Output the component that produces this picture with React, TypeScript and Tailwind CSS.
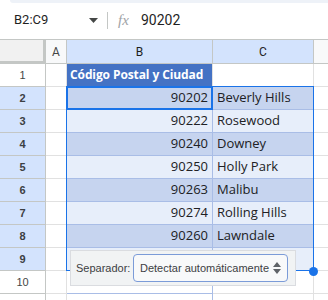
import React from "react";

const rows = [
  { n: 1, b: "Código Postal y Ciudad", c: "", kind: "head" },
  { n: 2, b: "90202", c: "Beverly Hills", kind: "dark" },
  { n: 3, b: "90222", c: "Rosewood", kind: "light" },
  { n: 4, b: "90240", c: "Downey", kind: "dark" },
  { n: 5, b: "90250", c: "Holly Park", kind: "light" },
  { n: 6, b: "90263", c: "Malibu", kind: "dark" },
  { n: 7, b: "90274", c: "Rolling Hills", kind: "light" },
  { n: 8, b: "90260", c: "Lawndale", kind: "dark" },
  { n: 9, b: "", c: "", kind: "light" },
  { n: 10, b: "", c: "", kind: "none" },
  { n: 11, b: "", c: "", kind: "none" },
];

const cellFont = { fontFamily: '"Open Sans", "Noto Sans", sans-serif' };

export default function App() {
  return (
    <div className="relative w-[328px] h-[300px] overflow-hidden bg-white" style={{ fontFamily: 'Roboto, "Liberation Sans", sans-serif' }}>
      {/* formula bar */}
      <div className="h-[40px] border-b border-[#c4c7c5] flex flex-col">
        <div className="h-[3px] ml-[10px] bg-[#eef2f8] rounded-bl-[4px]" />
        <div className="flex items-center h-[34px]">
          <div className="w-[80px] pl-[14px] text-[13px] text-[#1f1f1f]">B2:C9</div>
          <div className="w-[27px] flex justify-center">
            <svg width="9" height="5" viewBox="0 0 9 5"><path d="M0 0h9L4.5 5z" fill="#444746" /></svg>
          </div>
          <div className="w-px h-[17px] bg-[#c4c7c5]" />
          <div className="ml-[10px] w-[23px] text-[15px] italic text-[#a0a3a7]" style={{ fontFamily: '"Liberation Serif", serif' }}>fx</div>
          <div className="text-[14px] text-[#1f1f1f]">90202</div>
        </div>
      </div>
      {/* grid */}
      <div className="grid grid-cols-[46px_21px_146px_101px_1fr] text-[#202124]">
        {/* header row */}
        <div className="h-[24px] bg-[#f1f1f1] border-r-[3px] border-b-[3px] border-[#c4c7c5]" />
        <div className="h-[24px] bg-[#f8f9fa] border-r border-b border-[#c4c7c5] flex items-center justify-center text-[12px] text-[#444746]">A</div>
        <div className="h-[24px] bg-[#d3e3fd] border-r border-b border-[#c4c7c5] flex items-center justify-center text-[12px] text-[#1f1f1f]">B</div>
        <div className="h-[24px] bg-[#d3e3fd] border-r border-b border-[#c4c7c5] flex items-center justify-center text-[12px] text-[#1f1f1f]">C</div>
        <div className="h-[24px] bg-[#f8f9fa] border-b border-[#c4c7c5]" />
        {rows.map((r) => {
          const sel = r.n >= 2 && r.n <= 9;
          const bg =
            r.kind === "dark" ? "bg-[#c6d4ef]" : r.kind === "light" ? "bg-[#e7eefa]" : "bg-white";
          return (
            <React.Fragment key={r.n}>
              <div
                className={
                  "h-[23px] border-r border-b border-[#c4c7c5] flex items-center justify-center text-[11px] " +
                  (sel ? "bg-[#d3e3fd] font-bold text-[#3c4043]" : "bg-white text-[#444746]")
                }
                style={{ fontFamily: '"Liberation Sans", Arial, sans-serif' }}
              >
                {r.n}
              </div>
              <div className="h-[23px] border-r border-b border-[#e1e1e1]" />
              {r.kind === "head" ? (
                <div className="h-[23px] border-r border-b border-[#e1e1e1] bg-[#4472c4] text-white font-bold text-[12px] tracking-[-0.1px] flex items-center pl-[3px] whitespace-nowrap overflow-hidden" style={cellFont}>
                  {r.b}
                </div>
              ) : (
                <div className={"h-[23px] border-r border-b border-[#a9bde6] flex items-center justify-end pr-[4px] text-[13px] " + bg} style={cellFont}>
                  {r.b}
                </div>
              )}
              <div
                className={
                  "h-[23px] border-r border-b flex items-center pl-[4px] text-[13px] whitespace-nowrap " +
                  (r.kind === "head" || r.kind === "none" ? "bg-white border-[#e1e1e1]" : bg + " border-[#a9bde6]")
                }
                style={cellFont}
              >
                {r.c}
              </div>
              <div className="h-[23px] border-b border-[#e1e1e1]" />
            </React.Fragment>
          );
        })}
      </div>
      {/* selection overlay */}
      <div className="absolute left-[66px] top-[86px] w-[248px] h-[185px] border border-[#1a73e8] pointer-events-none" />
      <div className="absolute left-[66px] top-[86px] w-[147px] h-[24px] border-2 border-[#1a73e8] pointer-events-none" />
      <div className="absolute left-[309px] top-[267px] w-[9px] h-[9px] rounded-full bg-[#1a73e8]" />
      {/* separator panel */}
      <div className="absolute left-[70px] top-[250px] w-[226px] h-[36px] bg-[#f1f3f4] border border-[#dadce0] flex items-center pl-[5px] gap-[5px]" style={{ fontFamily: '"Liberation Sans", Arial, sans-serif' }}>
        <span className="w-[52px] text-[11px] text-[#3c4043] whitespace-nowrap">Separador:</span>
        <div className="w-[155px] h-[28px] bg-[#f8f9fa] border border-[#7b9bd8] rounded-[4px] flex items-center justify-between pl-[6px] pr-[6px]">
          <span className="text-[11px] text-[#3c4043] whitespace-nowrap">Detectar automáticamente</span>
          <svg width="8" height="12" viewBox="0 0 8 12"><path d="M0 5L4 0L8 5z M0 7h8L4 12z" fill="#5f6368" /></svg>
        </div>
      </div>
    </div>
  );
}
